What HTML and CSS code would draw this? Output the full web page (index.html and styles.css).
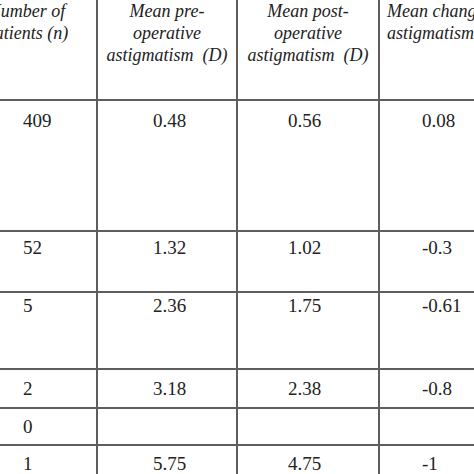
FILE: index.html
```html
<!DOCTYPE html>
<html>
<head>
<meta charset="utf-8">
<link rel="stylesheet" href="styles.css">
</head>
<body>
<table class="grid">
  <colgroup>
    <col class="c1"><col class="c2"><col class="c3"><col class="c4">
  </colgroup>
  <tr class="head">
    <th class="h1">Number of<br>patients (n)</th>
    <th class="hc">Mean pre-<br>operative<br>astigmatism &nbsp;(D)</th>
    <th class="hc">Mean post-<br>operative<br>astigmatism &nbsp;(D)</th>
    <th class="h4">Mean change in<br>astigmatism (D)</th>
  </tr>
  <tr class="r1">
    <td class="n">409</td><td class="a">0.48</td><td class="b">0.56</td><td class="d">0.08</td>
  </tr>
  <tr class="r2">
    <td class="n">52</td><td class="a">1.32</td><td class="b">1.02</td><td class="d">-0.3</td>
  </tr>
  <tr class="r3">
    <td class="n">5</td><td class="a">2.36</td><td class="b">1.75</td><td class="d">-0.61</td>
  </tr>
  <tr class="r4">
    <td class="n">2</td><td class="a">3.18</td><td class="b">2.38</td><td class="d">-0.8</td>
  </tr>
  <tr class="r5">
    <td class="n">0</td><td class="a"></td><td class="b"></td><td class="d"></td>
  </tr>
  <tr class="r6">
    <td class="n">1</td><td class="a">5.75</td><td class="b">4.75</td><td class="d">-1</td>
  </tr>
</table>
</body>
</html>
```
FILE: styles.css
```css
html, body {
  margin: 0;
  padding: 0;
  background: #ffffff;
  overflow: hidden;
  width: 474px;
  height: 474px;
}

.grid {
  border-collapse: collapse;
  table-layout: fixed;
  width: 560px;
  margin-left: -44px;
  margin-top: -1px;
  font-family: "Liberation Serif", "Times New Roman", serif;
  font-size: 19px;
  line-height: 22px;
  color: #222222;
}

.c1 { width: 140px; }
.c2 { width: 140px; }
.c3 { width: 142px; }
.c4 { width: 138px; }

.grid th,
.grid td {
  border: 2px solid #5e5e5e;
  vertical-align: top;
  padding: 0;
  white-space: nowrap;
  text-align: left;
  box-sizing: border-box;
}

.grid tr:first-child th { border-top: none; }
.grid th:last-child, .grid td:last-child { border-right: none; }

.grid .head th {
  font-style: italic;
  font-weight: normal;
  font-size: 18px;
  height: 101px;
  padding-top: 1px;
}

.grid th.hc { text-align: center; }
.grid th.h1 { text-align: center; }
.grid th.h4 { padding-left: 7px; }

.grid td.n { padding-left: 65px; }
.grid td.a { padding-left: 55px; }
.grid td.b { padding-left: 50px; }
.grid td.d { padding-left: 42px; }

.grid .r1 td { height: 131px; padding-top: 9px; }
.grid .r2 td { height: 61px; padding-top: 5px; }
.grid .r3 td { height: 77px; padding-top: 2px; }
.grid .r4 td { height: 39px; padding-top: 8px; }
.grid .r5 td { height: 37px; padding-top: 7px; }
.grid .r6 td { height: 40px; padding-top: 7px; }
```
